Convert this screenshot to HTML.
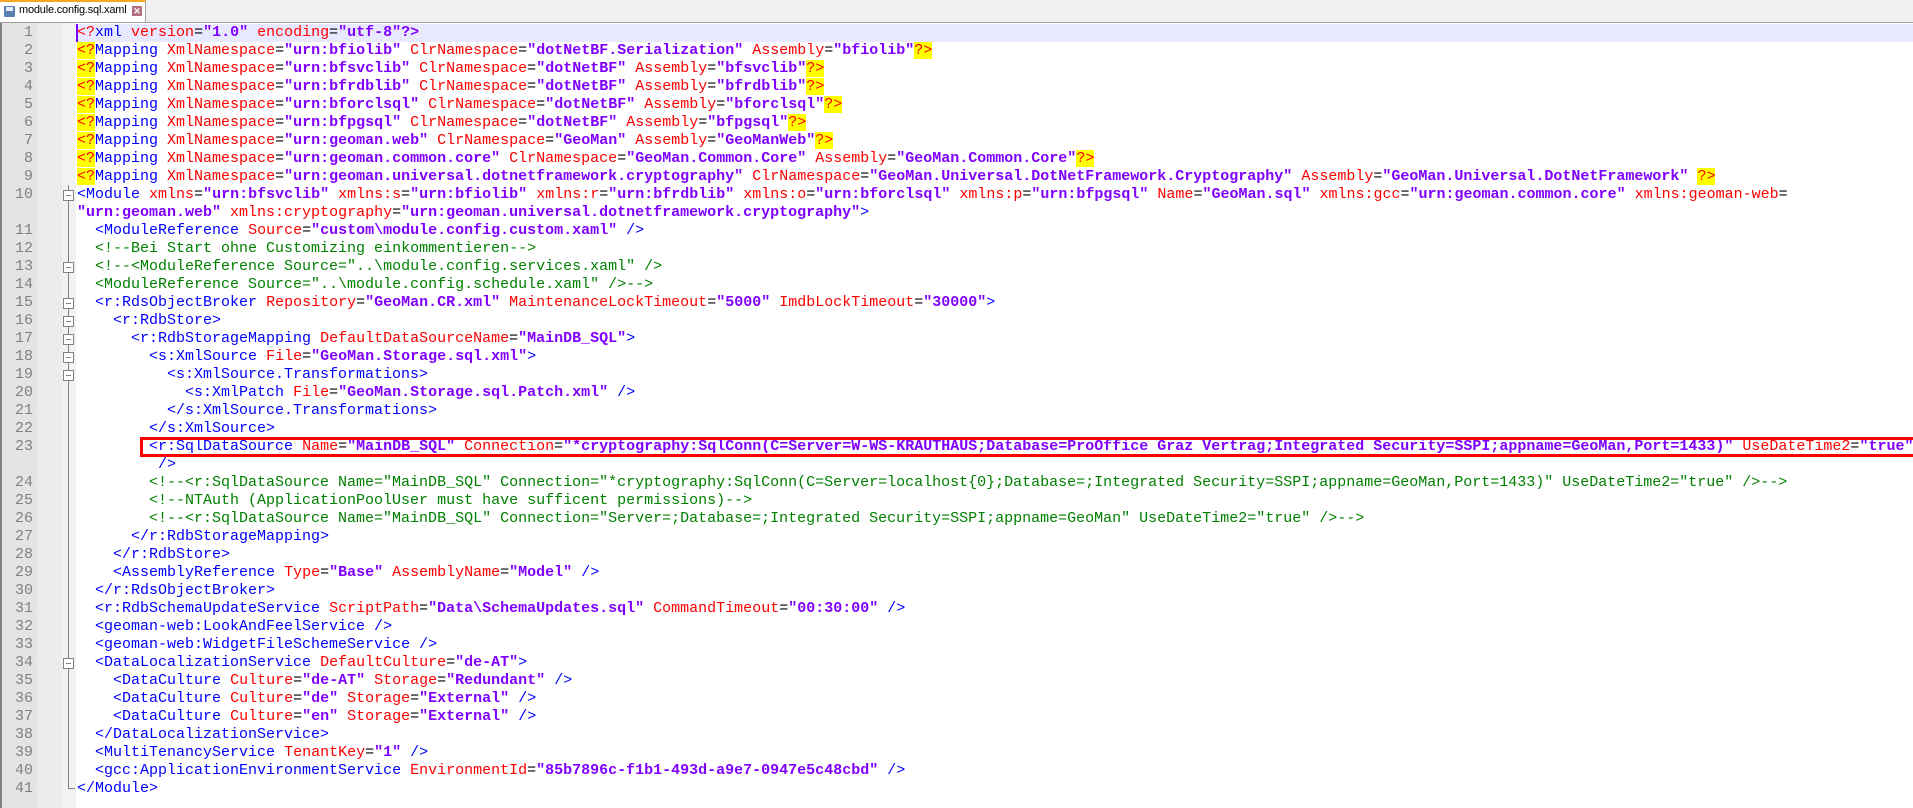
<!DOCTYPE html>
<html><head><meta charset="utf-8"><style>
html,body{margin:0;padding:0;width:1913px;height:808px;overflow:hidden;background:#fff;font-family:"Liberation Sans",sans-serif}
#tabbar{position:absolute;left:0;top:0;width:1913px;height:22px;background:#f0f0f0;border-bottom:1px solid #a0a0a0}
#tab{position:absolute;left:0;top:0;width:146px;height:22px;background:#fff;border-top:2px solid #f9a825;box-sizing:border-box;border-right:1px solid #a0a0a0}
#tab .lbl{position:absolute;left:19px;top:2px;font-size:11px;letter-spacing:-0.2px;color:#000;white-space:nowrap}
#tab .cls{position:absolute;left:132px;top:4px;width:10px;height:10px;background:#b07080;color:#fff;font-size:9px;line-height:10px;text-align:center;font-weight:bold}
#tab .sv{position:absolute;left:4px;top:4px;width:11px;height:11px;background:#5a7fb0;border-radius:1px}
#tab .sv:after{content:"";position:absolute;left:2px;top:1px;width:7px;height:4px;background:#e8eef8}
#gut{position:absolute;left:0;top:23px;width:37px;height:785px;background:#e4e4e4;border-left:2px solid #808080;box-sizing:border-box}
#gut2{position:absolute;left:37px;top:23px;width:25px;height:785px;background:#ececec}
#fold{position:absolute;left:62px;top:23px;width:14px;height:785px;background:repeating-conic-gradient(#f8f8f8 0 25%,#ececec 0 50%) 0 0/2px 2px}
.ln{position:absolute;left:0;width:33px;text-align:right;font:15px/18px "Liberation Mono",monospace;color:#808080}
.fb{position:absolute;left:63px;width:9px;height:9px;border:1px solid #808080;background:#fff}
.fb:after{content:"";position:absolute;left:2px;top:4px;width:5px;height:1px;background:#808080}
#vl{position:absolute;left:68px;top:185px;width:1px;height:603px;background:#808080}
#hl{position:absolute;left:68px;top:788px;width:7px;height:1px;background:#808080}
#cur{position:absolute;left:76px;top:24px;width:1837px;height:18px;background:#e8e8ff}
#caret{position:absolute;left:76px;top:24px;width:2px;height:18px;background:#8000ff}
.l{position:absolute;left:77px;font:15px/18px "Liberation Mono",monospace;white-space:pre;color:#000}
.b{color:#0000ff}.r{color:#ff0000}.v{color:#8000ff;font-weight:bold}.g{color:#008000}.y{background:#ffff00;color:#ff0000}
#box{position:absolute;left:140px;top:437px;width:1773px;height:20px;border:3px solid #ff0000;box-sizing:border-box;border-right:none}
</style></head><body>
<div id="tabbar"><div id="tab"><div class="sv"></div><div class="lbl">module.config.sql.xaml</div><div class="cls">✕</div></div></div>
<div id="gut"></div><div id="gut2"></div><div id="fold"></div>
<div id="cur"></div><div id="caret"></div>

<div class="ln" style="top:24px">1</div>
<div class="ln" style="top:42px">2</div>
<div class="ln" style="top:60px">3</div>
<div class="ln" style="top:78px">4</div>
<div class="ln" style="top:96px">5</div>
<div class="ln" style="top:114px">6</div>
<div class="ln" style="top:132px">7</div>
<div class="ln" style="top:150px">8</div>
<div class="ln" style="top:168px">9</div>
<div class="ln" style="top:186px">10</div>
<div class="ln" style="top:222px">11</div>
<div class="ln" style="top:240px">12</div>
<div class="ln" style="top:258px">13</div>
<div class="ln" style="top:276px">14</div>
<div class="ln" style="top:294px">15</div>
<div class="ln" style="top:312px">16</div>
<div class="ln" style="top:330px">17</div>
<div class="ln" style="top:348px">18</div>
<div class="ln" style="top:366px">19</div>
<div class="ln" style="top:384px">20</div>
<div class="ln" style="top:402px">21</div>
<div class="ln" style="top:420px">22</div>
<div class="ln" style="top:438px">23</div>
<div class="ln" style="top:474px">24</div>
<div class="ln" style="top:492px">25</div>
<div class="ln" style="top:510px">26</div>
<div class="ln" style="top:528px">27</div>
<div class="ln" style="top:546px">28</div>
<div class="ln" style="top:564px">29</div>
<div class="ln" style="top:582px">30</div>
<div class="ln" style="top:600px">31</div>
<div class="ln" style="top:618px">32</div>
<div class="ln" style="top:636px">33</div>
<div class="ln" style="top:654px">34</div>
<div class="ln" style="top:672px">35</div>
<div class="ln" style="top:690px">36</div>
<div class="ln" style="top:708px">37</div>
<div class="ln" style="top:726px">38</div>
<div class="ln" style="top:744px">39</div>
<div class="ln" style="top:762px">40</div>
<div class="ln" style="top:780px">41</div>

<div id="vl"></div><div id="hl"></div>
<div class="fb" style="top:190px"></div>
<div class="fb" style="top:262px"></div>
<div class="fb" style="top:298px"></div>
<div class="fb" style="top:316px"></div>
<div class="fb" style="top:334px"></div>
<div class="fb" style="top:352px"></div>
<div class="fb" style="top:370px"></div>
<div class="fb" style="top:658px"></div>

<div class="l" style="top:24px"><span class="r">&lt;?</span><span class="b">xml</span> <span class="r">version</span>=<span class="v">"1.0"</span> <span class="r">encoding</span>=<span class="v">"utf-8"</span><span class="v">?&gt;</span></div>
<div class="l" style="top:42px"><span class="y">&lt;?</span><span class="b">Mapping</span> <span class="r">XmlNamespace</span>=<span class="v">"urn:bfiolib"</span> <span class="r">ClrNamespace</span>=<span class="v">"dotNetBF.Serialization"</span> <span class="r">Assembly</span>=<span class="v">"bfiolib"</span><span class="y">?&gt;</span></div>
<div class="l" style="top:60px"><span class="y">&lt;?</span><span class="b">Mapping</span> <span class="r">XmlNamespace</span>=<span class="v">"urn:bfsvclib"</span> <span class="r">ClrNamespace</span>=<span class="v">"dotNetBF"</span> <span class="r">Assembly</span>=<span class="v">"bfsvclib"</span><span class="y">?&gt;</span></div>
<div class="l" style="top:78px"><span class="y">&lt;?</span><span class="b">Mapping</span> <span class="r">XmlNamespace</span>=<span class="v">"urn:bfrdblib"</span> <span class="r">ClrNamespace</span>=<span class="v">"dotNetBF"</span> <span class="r">Assembly</span>=<span class="v">"bfrdblib"</span><span class="y">?&gt;</span></div>
<div class="l" style="top:96px"><span class="y">&lt;?</span><span class="b">Mapping</span> <span class="r">XmlNamespace</span>=<span class="v">"urn:bforclsql"</span> <span class="r">ClrNamespace</span>=<span class="v">"dotNetBF"</span> <span class="r">Assembly</span>=<span class="v">"bforclsql"</span><span class="y">?&gt;</span></div>
<div class="l" style="top:114px"><span class="y">&lt;?</span><span class="b">Mapping</span> <span class="r">XmlNamespace</span>=<span class="v">"urn:bfpgsql"</span> <span class="r">ClrNamespace</span>=<span class="v">"dotNetBF"</span> <span class="r">Assembly</span>=<span class="v">"bfpgsql"</span><span class="y">?&gt;</span></div>
<div class="l" style="top:132px"><span class="y">&lt;?</span><span class="b">Mapping</span> <span class="r">XmlNamespace</span>=<span class="v">"urn:geoman.web"</span> <span class="r">ClrNamespace</span>=<span class="v">"GeoMan"</span> <span class="r">Assembly</span>=<span class="v">"GeoManWeb"</span><span class="y">?&gt;</span></div>
<div class="l" style="top:150px"><span class="y">&lt;?</span><span class="b">Mapping</span> <span class="r">XmlNamespace</span>=<span class="v">"urn:geoman.common.core"</span> <span class="r">ClrNamespace</span>=<span class="v">"GeoMan.Common.Core"</span> <span class="r">Assembly</span>=<span class="v">"GeoMan.Common.Core"</span><span class="y">?&gt;</span></div>
<div class="l" style="top:168px"><span class="y">&lt;?</span><span class="b">Mapping</span> <span class="r">XmlNamespace</span>=<span class="v">"urn:geoman.universal.dotnetframework.cryptography"</span> <span class="r">ClrNamespace</span>=<span class="v">"GeoMan.Universal.DotNetFramework.Cryptography"</span> <span class="r">Assembly</span>=<span class="v">"GeoMan.Universal.DotNetFramework"</span> <span class="y">?&gt;</span></div>
<div class="l" style="top:186px"><span class="b">&lt;Module</span> <span class="r">xmlns</span>=<span class="v">"urn:bfsvclib"</span> <span class="r">xmlns:s</span>=<span class="v">"urn:bfiolib"</span> <span class="r">xmlns:r</span>=<span class="v">"urn:bfrdblib"</span> <span class="r">xmlns:o</span>=<span class="v">"urn:bforclsql"</span> <span class="r">xmlns:p</span>=<span class="v">"urn:bfpgsql"</span> <span class="r">Name</span>=<span class="v">"GeoMan.sql"</span> <span class="r">xmlns:gcc</span>=<span class="v">"urn:geoman.common.core"</span> <span class="r">xmlns:geoman-web</span>=</div>
<div class="l" style="top:204px"><span class="v">"urn:geoman.web"</span> <span class="r">xmlns:cryptography</span>=<span class="v">"urn:geoman.universal.dotnetframework.cryptography"</span><span class="b">&gt;</span></div>
<div class="l" style="top:222px">  <span class="b">&lt;ModuleReference</span> <span class="r">Source</span>=<span class="v">"custom\module.config.custom.xaml"</span> <span class="b">/&gt;</span></div>
<div class="l" style="top:240px">  <span class="g">&lt;!--Bei Start ohne Customizing einkommentieren--&gt;</span></div>
<div class="l" style="top:258px">  <span class="g">&lt;!--&lt;ModuleReference Source="..\module.config.services.xaml" /&gt;</span></div>
<div class="l" style="top:276px">  <span class="g">&lt;ModuleReference Source="..\module.config.schedule.xaml" /&gt;--&gt;</span></div>
<div class="l" style="top:294px">  <span class="b">&lt;r:RdsObjectBroker</span> <span class="r">Repository</span>=<span class="v">"GeoMan.CR.xml"</span> <span class="r">MaintenanceLockTimeout</span>=<span class="v">"5000"</span> <span class="r">ImdbLockTimeout</span>=<span class="v">"30000"</span><span class="b">&gt;</span></div>
<div class="l" style="top:312px">    <span class="b">&lt;r:RdbStore&gt;</span></div>
<div class="l" style="top:330px">      <span class="b">&lt;r:RdbStorageMapping</span> <span class="r">DefaultDataSourceName</span>=<span class="v">"MainDB_SQL"</span><span class="b">&gt;</span></div>
<div class="l" style="top:348px">        <span class="b">&lt;s:XmlSource</span> <span class="r">File</span>=<span class="v">"GeoMan.Storage.sql.xml"</span><span class="b">&gt;</span></div>
<div class="l" style="top:366px">          <span class="b">&lt;s:XmlSource.Transformations&gt;</span></div>
<div class="l" style="top:384px">            <span class="b">&lt;s:XmlPatch</span> <span class="r">File</span>=<span class="v">"GeoMan.Storage.sql.Patch.xml"</span> <span class="b">/&gt;</span></div>
<div class="l" style="top:402px">          <span class="b">&lt;/s:XmlSource.Transformations&gt;</span></div>
<div class="l" style="top:420px">        <span class="b">&lt;/s:XmlSource&gt;</span></div>
<div class="l" style="top:438px">        <span class="b">&lt;r:SqlDataSource</span> <span class="r">Name</span>=<span class="v">"MainDB_SQL"</span> <span class="r">Connection</span>=<span class="v">"*cryptography:SqlConn(C=Server=W-WS-KRAUTHAUS;Database=ProOffice Graz Vertrag;Integrated Security=SSPI;appname=GeoMan,Port=1433)"</span> <span class="r">UseDateTime2</span>=<span class="v">"true"</span></div>
<div class="l" style="top:456px">         <span class="b">/&gt;</span></div>
<div class="l" style="top:474px">        <span class="g">&lt;!--&lt;r:SqlDataSource Name="MainDB_SQL" Connection="*cryptography:SqlConn(C=Server=localhost{0};Database=;Integrated Security=SSPI;appname=GeoMan,Port=1433)" UseDateTime2="true" /&gt;--&gt;</span></div>
<div class="l" style="top:492px">        <span class="g">&lt;!--NTAuth (ApplicationPoolUser must have sufficent permissions)--&gt;</span></div>
<div class="l" style="top:510px">        <span class="g">&lt;!--&lt;r:SqlDataSource Name="MainDB_SQL" Connection="Server=;Database=;Integrated Security=SSPI;appname=GeoMan" UseDateTime2="true" /&gt;--&gt;</span></div>
<div class="l" style="top:528px">      <span class="b">&lt;/r:RdbStorageMapping&gt;</span></div>
<div class="l" style="top:546px">    <span class="b">&lt;/r:RdbStore&gt;</span></div>
<div class="l" style="top:564px">    <span class="b">&lt;AssemblyReference</span> <span class="r">Type</span>=<span class="v">"Base"</span> <span class="r">AssemblyName</span>=<span class="v">"Model"</span> <span class="b">/&gt;</span></div>
<div class="l" style="top:582px">  <span class="b">&lt;/r:RdsObjectBroker&gt;</span></div>
<div class="l" style="top:600px">  <span class="b">&lt;r:RdbSchemaUpdateService</span> <span class="r">ScriptPath</span>=<span class="v">"Data\SchemaUpdates.sql"</span> <span class="r">CommandTimeout</span>=<span class="v">"00:30:00"</span> <span class="b">/&gt;</span></div>
<div class="l" style="top:618px">  <span class="b">&lt;geoman-web:LookAndFeelService /&gt;</span></div>
<div class="l" style="top:636px">  <span class="b">&lt;geoman-web:WidgetFileSchemeService /&gt;</span></div>
<div class="l" style="top:654px">  <span class="b">&lt;DataLocalizationService</span> <span class="r">DefaultCulture</span>=<span class="v">"de-AT"</span><span class="b">&gt;</span></div>
<div class="l" style="top:672px">    <span class="b">&lt;DataCulture</span> <span class="r">Culture</span>=<span class="v">"de-AT"</span> <span class="r">Storage</span>=<span class="v">"Redundant"</span> <span class="b">/&gt;</span></div>
<div class="l" style="top:690px">    <span class="b">&lt;DataCulture</span> <span class="r">Culture</span>=<span class="v">"de"</span> <span class="r">Storage</span>=<span class="v">"External"</span> <span class="b">/&gt;</span></div>
<div class="l" style="top:708px">    <span class="b">&lt;DataCulture</span> <span class="r">Culture</span>=<span class="v">"en"</span> <span class="r">Storage</span>=<span class="v">"External"</span> <span class="b">/&gt;</span></div>
<div class="l" style="top:726px">  <span class="b">&lt;/DataLocalizationService&gt;</span></div>
<div class="l" style="top:744px">  <span class="b">&lt;MultiTenancyService</span> <span class="r">TenantKey</span>=<span class="v">"1"</span> <span class="b">/&gt;</span></div>
<div class="l" style="top:762px">  <span class="b">&lt;gcc:ApplicationEnvironmentService</span> <span class="r">EnvironmentId</span>=<span class="v">"85b7896c-f1b1-493d-a9e7-0947e5c48cbd"</span> <span class="b">/&gt;</span></div>
<div class="l" style="top:780px"><span class="b">&lt;/Module&gt;</span></div>
<div id="box"></div>
</body></html>
